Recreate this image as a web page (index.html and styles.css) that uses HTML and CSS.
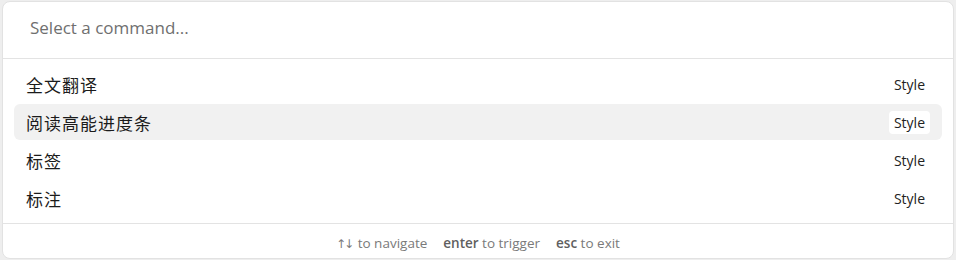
FILE: index.html
```
<!DOCTYPE html>
<html lang="en">
<head>
    <meta charset="UTF-8">
    <meta name="viewport" content="width=device-width, initial-scale=1.0">
    <title>Command palette</title>
    <link rel="stylesheet" href="styles.css">
</head>
<body>
<div class="palette">
    <div class="search">
        <input class="search-input" type="text" placeholder="Select a command...">
    </div>
    <ul class="list">
        <li class="item"><span class="label">全文翻译</span><span class="tag">Style</span></li>
        <li class="item active"><span class="label">阅读高能进度条</span><span class="tag">Style</span></li>
        <li class="item"><span class="label">标签</span><span class="tag">Style</span></li>
        <li class="item"><span class="label">标注</span><span class="tag">Style</span></li>
    </ul>
    <div class="footer">
        <span class="hint"><span class="arrows">↑↓</span> to navigate</span>
        <span class="hint"><b>enter</b> to trigger</span>
        <span class="hint"><b>esc</b> to exit</span>
    </div>
</div>
</body>
</html>
```

FILE: styles.css
```
body{
    margin: 0;
    padding: 1px 2px 2px 2px;
    background-color: #eeeeee;
    font-family: "Open Sans", "Noto Sans", "Noto Sans CJK SC", sans-serif;
}
.palette{
    background-color: white;
    border: 1px solid #e2e2e2;
    border-radius: 8px;
    overflow: hidden;
}
.search{
    height: 56px;
    display: flex;
    align-items: center;
    padding: 0 27px;
    border-bottom: 1px solid #e3e3e3;
}
.search-input{
    border: none;
    outline: none;
    width: 100%;
    font-family: inherit;
    font-size: 17px;
    color: #333;
    padding: 0;
    margin-top: -5px;
}
.search-input::placeholder{
    color: #6f6f6f;
}
.list{
    list-style: none;
    margin: 0;
    padding: 7px 11px;
    display: flex;
    flex-direction: column;
    gap: 2px;
    border-bottom: 1px solid #e3e3e3;
}
.item{
    height: 36px;
    display: flex;
    align-items: center;
    justify-content: space-between;
    padding: 0 12px 0 12px;
    border-radius: 6px;
}
.label{
    font-family: "Noto Sans CJK SC", sans-serif;
    font-size: 17px;
    letter-spacing: 1px;
    color: #1b1b1b;
}
.tag{
    font-size: 14px;
    color: #222;
    padding: 2px 5px;
    border-radius: 4px;
}
.active{
    background-color: #f1f1f1;
}
.active .tag{
    background-color: white;
}
.footer{
    height: 34px;
    padding-top: 3px;
    box-sizing: border-box;
    display: flex;
    align-items: center;
    justify-content: center;
    gap: 16px;
    font-size: 13.5px;
    color: #7a7a7a;
}
.arrows{
    font-family: "DejaVu Sans", sans-serif;
    font-size: 12px;
    letter-spacing: -2px;
    margin-right: 2px;
}
.footer b{
    font-weight: 600;
    color: #5f5f5f;
}
```
